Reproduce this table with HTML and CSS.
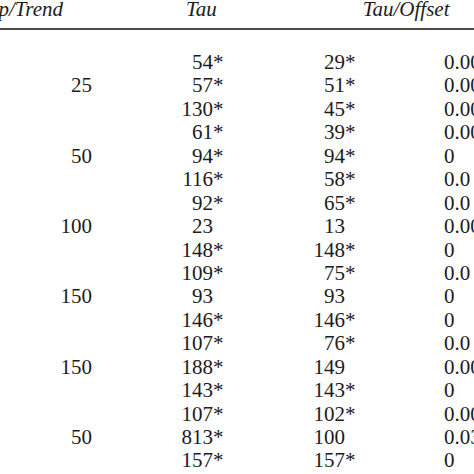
FILE: index.html
```html
<!DOCTYPE html>
<html>
<head>
<meta charset="utf-8">
<link rel="stylesheet" href="styles.css">
</head>
<body>
<div class="table">
  <div class="head">
    <div class="h-first"><span>Exp/Trend</span></div>
    <div class="h-tau">Tau</div>
    <div class="h-off">Tau/Offset</div>
  </div>
  <div class="rows">
    <div class="row"><span class="c1"></span><span class="c2">54</span><span class="st">*</span><span class="c3">29</span><span class="st">*</span><span class="c4">0.004</span></div>
    <div class="row"><span class="c1">25</span><span class="c2">57</span><span class="st">*</span><span class="c3">51</span><span class="st">*</span><span class="c4">0.004</span></div>
    <div class="row"><span class="c1"></span><span class="c2">130</span><span class="st">*</span><span class="c3">45</span><span class="st">*</span><span class="c4">0.004</span></div>
    <div class="row"><span class="c1"></span><span class="c2">61</span><span class="st">*</span><span class="c3">39</span><span class="st">*</span><span class="c4">0.004</span></div>
    <div class="row"><span class="c1">50</span><span class="c2">94</span><span class="st">*</span><span class="c3">94</span><span class="st">*</span><span class="c4">0</span></div>
    <div class="row"><span class="c1"></span><span class="c2">116</span><span class="st">*</span><span class="c3">58</span><span class="st">*</span><span class="c4">0.0 1</span></div>
    <div class="row"><span class="c1"></span><span class="c2">92</span><span class="st">*</span><span class="c3">65</span><span class="st">*</span><span class="c4">0.0 1</span></div>
    <div class="row"><span class="c1">100</span><span class="c2">23</span><span class="st"></span><span class="c3">13</span><span class="st"></span><span class="c4">0.004</span></div>
    <div class="row"><span class="c1"></span><span class="c2">148</span><span class="st">*</span><span class="c3">148</span><span class="st">*</span><span class="c4">0</span></div>
    <div class="row"><span class="c1"></span><span class="c2">109</span><span class="st">*</span><span class="c3">75</span><span class="st">*</span><span class="c4">0.0 1</span></div>
    <div class="row"><span class="c1">150</span><span class="c2">93</span><span class="st"></span><span class="c3">93</span><span class="st"></span><span class="c4">0</span></div>
    <div class="row"><span class="c1"></span><span class="c2">146</span><span class="st">*</span><span class="c3">146</span><span class="st">*</span><span class="c4">0</span></div>
    <div class="row"><span class="c1"></span><span class="c2">107</span><span class="st">*</span><span class="c3">76</span><span class="st">*</span><span class="c4">0.0 1</span></div>
    <div class="row"><span class="c1">150</span><span class="c2">188</span><span class="st">*</span><span class="c3">149</span><span class="st"></span><span class="c4">0.004</span></div>
    <div class="row"><span class="c1"></span><span class="c2">143</span><span class="st">*</span><span class="c3">143</span><span class="st">*</span><span class="c4">0</span></div>
    <div class="row"><span class="c1"></span><span class="c2">107</span><span class="st">*</span><span class="c3">102</span><span class="st">*</span><span class="c4">0.004</span></div>
    <div class="row"><span class="c1">50</span><span class="c2">813</span><span class="st">*</span><span class="c3">100</span><span class="st"></span><span class="c4">0.03</span></div>
    <div class="row"><span class="c1"></span><span class="c2">157</span><span class="st">*</span><span class="c3">157</span><span class="st">*</span><span class="c4">0</span></div>
  </div>
</div>
</body>
</html>
```

FILE: styles.css
```css
html, body {
  margin: 0;
  padding: 0;
  background: #ffffff;
  overflow: hidden;
}

body {
  width: 474px;
  height: 474px;
  font-family: "Liberation Serif", "Times New Roman", serif;
  font-size: 21px;
  color: #1c1c1c;
}

.table {
  width: 474px;
}

.head {
  display: flex;
  align-items: baseline;
  line-height: 18px;
  height: 28px;
  font-style: italic;
  white-space: nowrap;
  border-bottom: 2px solid #4a4a4a;
  box-sizing: content-box;
}

.h-first {
  width: 63px;
  flex: 0 0 63px;
  display: flex;
  justify-content: flex-end;
}

.h-tau {
  margin-left: 123px;
}

.h-off {
  margin-left: 146px;
}

.rows {
  padding-top: 21px;
}

.row {
  display: grid;
  grid-template-columns: 92px 121px 11px 121px 11px 1fr;
  line-height: 23.44px;
  white-space: nowrap;
}

.c1, .c2, .c3 {
  text-align: right;
}

.st {
  text-align: left;
}

.c4 {
  padding-left: 88px;
  white-space: pre;
}
```
